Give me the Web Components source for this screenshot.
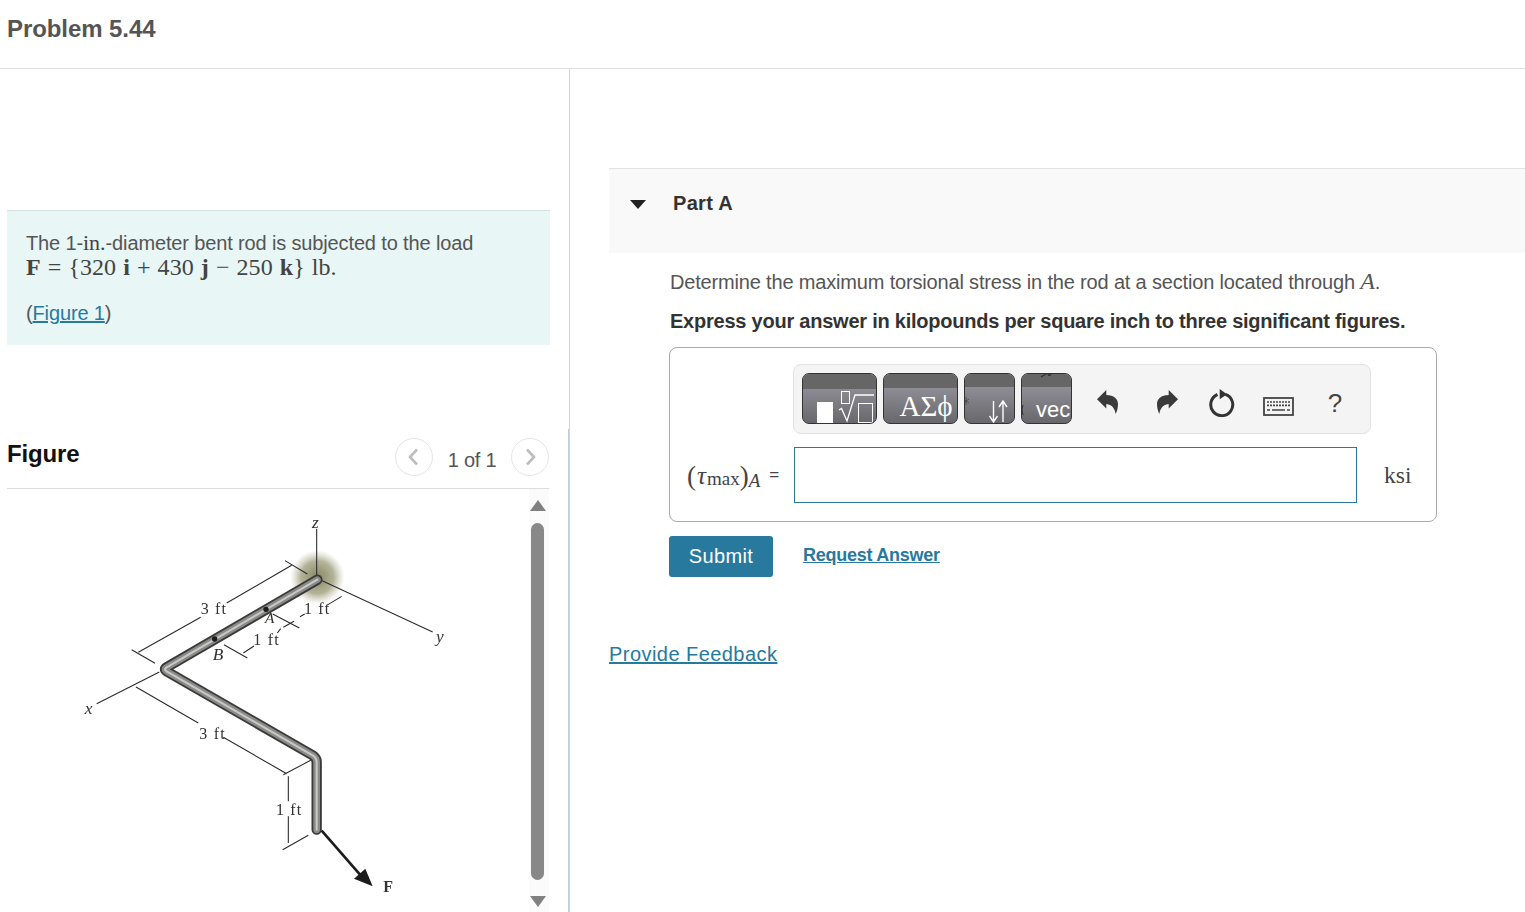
<!DOCTYPE html>
<html lang="en">
<head>
<meta charset="utf-8">
<title>Problem 5.44</title>
<style>
html,body{margin:0;padding:0;background:#fff}
body{width:1525px;height:912px;overflow:hidden;font-family:"Liberation Sans",Arial,sans-serif;font-size:20px;color:#555}
</style>
</head>
<body>
<mp-page>
  <mp-header slot="header">Problem 5.44</mp-header>
  <mp-left slot="left">
    <mp-problem></mp-problem>
    <mp-figure></mp-figure>
  </mp-left>
  <mp-right slot="right">
    <mp-part-head>Part A</mp-part-head>
    <mp-part></mp-part>
  </mp-right>
</mp-page>
<script>
function def(name, html){
  customElements.define(name, class extends HTMLElement{
    constructor(){super();this.attachShadow({mode:'open'}).innerHTML=html;}
  });
}
const MATH='"Liberation Serif","DejaVu Serif",serif';

def('mp-page',`<style>
:host{display:grid;grid-template-columns:570px 1fr;grid-template-rows:69px 843px;width:1525px;height:912px}
.h{grid-column:1/3}
</style>
<div class="h"><slot name="header"></slot></div>
<slot name="left"></slot>
<slot name="right"></slot>`);

def('mp-header',`<style>
:host{display:flex;align-items:center;box-sizing:border-box;height:69px;padding:0 7px 10px;border-bottom:1px solid #e2e2e2;font:bold 24px "Liberation Sans",Arial,sans-serif;color:#555;letter-spacing:-.08px}
</style><slot></slot>`);

def('mp-left',`<style>
:host{display:flex;flex-direction:column;box-sizing:border-box;height:843px;padding:141px 0 0 7px;position:relative;overflow:hidden;border-right:1px solid #d4d4d4}
.rule{position:absolute;right:-1px;top:360px;bottom:0;width:2px;background:#bccde0}
</style><slot></slot><div class="rule"></div>`);

def('mp-problem',`<style>
:host{display:block;flex:none;box-sizing:border-box;width:543px;height:135px;background:#e8f6f6;border-top:1px solid #d9e2e2;padding:20px 19px 0;font-size:20px;line-height:24px;color:#555;letter-spacing:-.14px}
.m{font-family:${MATH};font-size:22px;color:#444;letter-spacing:0}
.e{font-family:${MATH};font-size:24px;color:#444;letter-spacing:.05px;word-spacing:1px}
p{margin:0}
.f{margin-top:21px}
a{color:#27799e;text-decoration:underline}
</style>
<p>The 1-<span class="m">in.</span>-diameter bent rod is subjected to the load<br>
<span class="e"><b>F</b> = {320 <b>i</b> + 430 <b>j</b> &#8722; 250 <b>k</b>} lb.</span></p>
<p class="f">(<a>Figure 1</a>)</p>`);

def('mp-nav-btn',`<style>
:host{display:block;box-sizing:border-box;width:38px;height:38px;border:1px solid #e4e4e4;border-radius:50%;background:#fff}
svg{display:block;width:36px;height:36px}
</style><svg viewBox="0 0 36 36"><path d="M21 10.5 L14 18 L21 25.5" fill="none" stroke="#bdbdbd" stroke-width="2.6"/></svg>`);

def('mp-figure',`<style>
:host{display:block;flex:none;width:542px;margin-top:94px;position:relative}
.head{display:flex;align-items:center;box-sizing:border-box;height:50px;border-bottom:1px solid #ddd}
h2{margin:0 0 19px;font:bold 24px "Liberation Sans",Arial,sans-serif;color:#111;flex:1;letter-spacing:-.15px}
.nav{display:flex;align-items:center;padding-bottom:13px}
.count{width:78px;text-align:center;font-size:20px;color:#555;padding-top:6px;letter-spacing:-.25px}
.next{transform:scaleX(-1)}
.body{display:flex;height:424px}
.art{width:522px;height:424px;overflow:hidden}
.bar{width:20px;height:424px;background:#fbfbfb;display:flex;flex-direction:column;align-items:center;padding:11px 3px 0 0;box-sizing:border-box}
.up,.down{width:0;height:0;border-left:8px solid transparent;border-right:8px solid transparent}
.up{border-bottom:11px solid #808080}
.down{border-top:11px solid #808080;margin-top:16px}
.thumb{width:13px;height:357px;background:#888;border-radius:7px;margin-top:12px}
svg{display:block;margin:19px 0 0 63px;filter:blur(.5px)}
text{font-family:${MATH};fill:#333}
.ft{font-size:48px;letter-spacing:3.5px}
</style>
<div class="head"><h2>Figure</h2>
<div class="nav"><mp-nav-btn></mp-nav-btn><span class="count">1 of 1</span><mp-nav-btn class="next"></mp-nav-btn></div></div>
<div class="body"><div class="art">
<svg width="400" height="400" viewBox="0 0 1200 1200">
<defs>
<radialGradient id="glow"><stop offset="0" stop-color="#85855f"/><stop offset=".6" stop-color="#a5a586" stop-opacity=".85"/><stop offset="1" stop-color="#c4c4b0" stop-opacity="0"/></radialGradient>
</defs>
<circle cx="742" cy="208" r="82" fill="url(#glow)"/>
<g fill="none" stroke="#2a2a2a" stroke-width="3.2">
<path d="M740 62V205"/>
<path d="M750 215L1088 372"/>
<path d="M268 492L80 587"/>
<path d="M205 433L392 328M470 285L665 172M645 158L712 198M185 425L255 466"/>
<path d="M198 537L385 645M460 688L650 797M640 800L722 757"/>
<path d="M655 805V880M655 925V1005M638 1025L715 982"/>
<path d="M608 318L688 360M672 340L640 358M622 375L632 362M704 318L690 326M770 292L815 265"/>
<path d="M462 410L532 450M520 435L552 414"/>
</g>
<path d="M742 215L290 478Q280 484 290 490L728 742Q740 750 740 762V965" fill="none" stroke="#3a3a3a" stroke-width="31" stroke-linecap="round"/>
<path d="M742 215L290 478Q280 484 290 490L728 742Q740 750 740 762V965" fill="none" stroke="#8a8a88" stroke-width="20" stroke-linecap="round"/>
<path d="M742 215L290 478Q280 484 290 490L728 742Q740 750 740 762V965" fill="none" stroke="#c9c9c6" stroke-width="6" stroke-linecap="round"/>
<circle cx="588" cy="304" r="8" fill="#1c1c1c"/><circle cx="434" cy="393" r="8" fill="#1c1c1c"/>
<path d="M755 968L872 1102" fill="none" stroke="#1c1c1c" stroke-width="8"/>
<path d="M908 1135L852 1112L886 1082Z" fill="#1c1c1c"/>
<text class="ft" x="392" y="318">3 ft</text><text class="ft" x="702" y="318">1 ft</text><text class="ft" x="550" y="410">1 ft</text>
<text class="ft" x="388" y="692">3 ft</text><text class="ft" x="618" y="922">1 ft</text>
<text x="940" y="1152" font-weight="bold" font-size="48">F</text>
<g font-size="52" font-style="italic">
<text x="726" y="60">z</text><text x="1098" y="402">y</text><text x="44" y="618">x</text>
<text x="585" y="346" font-size="46">A</text><text x="428" y="456">B</text>
</g>
</svg></div>
<div class="bar"><div class="up"></div><div class="thumb"></div><div class="down"></div></div>
</div>`);

def('mp-right',`<style>
:host{display:block;box-sizing:border-box;height:843px;padding:99px 0 0 39px}
</style><slot></slot>`);

def('mp-part-head',`<style>
:host{display:flex;align-items:flex-start;box-sizing:border-box;height:85px;background:#f9f9f9;border-top:1px solid #e2e2e2;padding:22px 0 0 21px;font:bold 20px/24px "Liberation Sans",Arial,sans-serif;color:#333;letter-spacing:.3px}
i{width:0;height:0;margin:9px 27px 0 0;border-left:8px solid transparent;border-right:8px solid transparent;border-top:9px solid #222}
</style><i></i><slot></slot>`);

def('mp-part',`<style>
:host{display:block;padding:17px 88px 0 60px;font-size:20px;line-height:24px;color:#555}
p{margin:0 0 15px 1px;letter-spacing:-.17px;white-space:nowrap}
.m{font-family:${MATH};font-style:italic;font-size:24px;line-height:20px}
b{color:#333;letter-spacing:-.23px}
.box{box-sizing:border-box;height:175px;border:1px solid #aaa;border-radius:8px;margin-top:-1px;padding:16px 0 0 123px;position:relative}
.row{display:flex;align-items:center;margin:13px 0 0 -106px;height:56px}
.lab{width:107px;display:flex;align-items:center;font-family:${MATH};color:#444;font-size:27px;white-space:nowrap;margin-top:2px}
.lab i{font-size:25px;margin:0 1px}
.lab small{font-size:19px;position:relative;top:3px}
.lab sub{font-size:19px;font-style:italic;line-height:0;position:relative;top:5px;vertical-align:baseline}
.lab .eq{font:17px "Liberation Sans",sans-serif;margin:-2px 0 0 9px}
.in{box-sizing:border-box;width:563px;height:56px;border:1px solid #27799e}
.unit{margin-left:27px;font-family:${MATH};font-size:23.500px;color:#444;margin-top:-1px}
.act{display:flex;align-items:center;margin-top:14px;gap:30px}
button{box-sizing:border-box;width:104px;height:41px;border:0;border-radius:3px;background:#27799e;color:#fff;font:20px "Liberation Sans",Arial,sans-serif;padding:0;letter-spacing:.4px}
.ra{font-weight:bold;font-size:18px;color:#27799e;text-decoration:underline;letter-spacing:-.25px;margin-top:-3px}
.fb{display:block;margin:65px 0 0 -60px;color:#27799e;text-decoration:underline;font-size:20px;line-height:24px;letter-spacing:.45px}
</style>
<p>Determine the maximum torsional stress in the rod at a section located through <span class="m">A</span>.</p>
<p><b>Express your answer in kilopounds per square inch to three significant figures.</b></p>
<div class="box">
<mp-toolbar></mp-toolbar>
<div class="row"><span class="lab">(<i>τ</i><small>max</small>)<sub>A</sub><span class="eq">=</span></span><div class="in"></div><span class="unit">ksi</span></div>
</div>
<div class="act"><button>Submit</button><a class="ra">Request Answer</a></div>
<a class="fb">Provide Feedback</a>`);

def('mp-tool',`<style>
:host{display:block;box-sizing:border-box;height:51px;border:1px solid #333;border-radius:7px;overflow:hidden;background:linear-gradient(#9d9ca6 0,#68676b 100%)}
</style><slot></slot>`);

def('mp-toolbar',`<style>
:host{display:flex;align-items:flex-start;box-sizing:border-box;width:578px;height:70px;background:#f4f4f4;border:1px solid #e2e2e2;border-radius:8px;padding:8px 0 0 8px}
.g{display:flex;gap:6px}
svg{display:block}
.ic{flex:none}
text{fill:#fff}
.q{font-size:26px;line-height:30px;color:#444;margin:15px 0 0 33px;width:16px;text-align:center}
</style>
<div class="g">
<mp-tool style="width:75px"><svg width="73" height="49" viewBox="0 0 73 49"><rect width="73" height="15" fill="#666"/><rect x="14" y="28" width="16" height="21" fill="#fff"/><rect x="38.500" y="17.500" width="8" height="12" fill="none" stroke="#fff"/><path d="M36 36L38.500 34.500L44 47L52 21H71" fill="none" stroke="#fff" stroke-width="1.3"/><rect x="55.500" y="29.500" width="14" height="19" fill="none" stroke="#fff"/></svg></mp-tool>
<mp-tool style="width:75px"><svg width="73" height="49" viewBox="0 0 73 49"><rect width="73" height="14" fill="#666"/><text x="42" y="42" text-anchor="middle" font-family='"Liberation Serif",serif' font-size="29">ΑΣϕ</text></svg></mp-tool>
<mp-tool style="width:51px"><svg width="49" height="49" viewBox="0 0 49 49"><rect width="49" height="13" fill="#666"/><path d="M1 23l0 8M-2 25l6 4M4 25l-6 4" stroke="#444" stroke-width=".8"/><path d="M28.500 27V48M24.500 42L28.500 48L32.500 42M38 48V27M34 33L38 27L42 33" fill="none" stroke="#fff" stroke-width="1.4"/></svg></mp-tool>
<mp-tool style="width:51px"><svg width="49" height="49" viewBox="0 0 49 49"><rect width="49" height="13" fill="#666"/><path d="M19 3L24 0M26 0Q27 3 29 0" fill="none" stroke="#333" stroke-width="1.4"/><path d="M1 31Q-1 36 1 41" fill="none" stroke="#333"/><text x="14" y="43" font-family='"Liberation Sans",sans-serif' font-size="22">vec</text></svg></mp-tool>
</div>
<div class="ic" style="margin:17px 0 0 25px;width:22px"><svg width="22" height="25" viewBox="0 0 22 25"><path d="M0 9.300L9.300 0V5C17 5 21 9 21 14C21 18 20 21 18.700 24C18 20 16 14.500 9.300 14V18.500Z" fill="#3a3a3a"/></svg></div>
<div class="ic" style="margin:17px 0 0 37px;width:22px"><svg width="22" height="25" viewBox="0 0 22 25"><path d="M22 9.300L12.700 0V5C5 5 1 9 1 14C1 18 2 21 3.300 24C4 20 6 14.500 12.700 14V18.500Z" fill="#3a3a3a"/></svg></div>
<div class="ic" style="margin:16px 0 0 31px;width:26px"><svg width="26" height="28" viewBox="0 0 26 28"><path d="M8.500 5.500A11 11 0 1 0 16.500 5.300" fill="none" stroke="#333" stroke-width="3"/><path d="M10.700 0L18 5.300L10.700 10.300Z" fill="#333"/></svg></div>
<div class="ic" style="margin:24px 0 0 28px;width:31px"><svg width="31" height="19" viewBox="0 0 31 19"><rect x="1" y="1" width="29" height="17" fill="#f4f4f4" stroke="#444" stroke-width="1.8"/><path d="M4 5h23M4 8.300h23" stroke="#444" stroke-width="1.7" stroke-dasharray="2 1"/><path d="M4 13h3M9 13h13M24 13h3" stroke="#444" stroke-width="1.7"/></svg></div>
<div class="q">?</div>`);
</script>
</body>
</html>
